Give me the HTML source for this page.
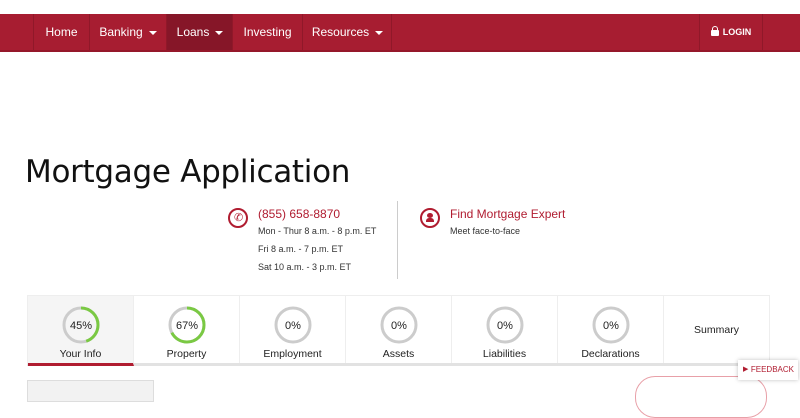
<!DOCTYPE html>
<html><head><style>
body{margin:0;width:800px;height:400px;overflow:hidden;background:#fff;font-family:"Liberation Sans",sans-serif;position:relative}
.nav{position:absolute;top:14px;left:0;width:800px;height:36px;background:#a71d31;border-bottom:2px solid #95182a}
.nav div{position:absolute;top:0;height:36px;line-height:37px;color:#fff;font-size:12px;text-align:center;border-left:1px solid #901829}
.car{display:inline-block;border-left:4px solid transparent;border-right:4px solid transparent;border-top:4px solid #fff;vertical-align:middle;margin-left:6px}
h1{position:absolute;left:25px;top:154px;margin:0;font-family:"DejaVu Sans",sans-serif;font-weight:normal;font-size:31px;color:#111;letter-spacing:-0.3px}
.ic{position:absolute;width:16px;height:16px;border:2px solid #b01c30;border-radius:50%}
.red{color:#b01c30;font-size:12px;position:absolute}
.sm{font-size:9px;color:#333;position:absolute}
.tabs{position:absolute;left:27px;top:295px;width:741px;height:67px;border:1px solid #eee;border-bottom:3px solid #e2e2e2}
.tab{position:absolute;top:0;width:105px;height:67px;border-right:1px solid #eee;text-align:center}
.tab svg{position:absolute;left:34px;top:10px}
.tab .l{position:absolute;top:52px;width:100%;font-size:10.5px;color:#222}
</style></head><body>
<div class="nav">
<div style="left:33px;width:55px">Home</div>
<div style="left:89px;width:76px">Banking<span class="car"></span></div>
<div style="left:166px;width:66px;background:#861628">Loans<span class="car"></span></div>
<div style="left:232px;width:69px">Investing</div>
<div style="left:302px;width:89px">Resources<span class="car"></span></div>
<div style="left:391px;width:0"></div>
<div style="left:699px;width:62px;font-size:9px;font-weight:bold"><span style="display:inline-block;width:8px;height:6px;background:#fff;border-radius:1px;margin-right:4px;position:relative;top:1px"><span style="position:absolute;left:1px;top:-4px;width:4px;height:4px;border:1px solid #fff;border-bottom:none;border-radius:3px 3px 0 0"></span></span>LOGIN</div>
<div style="left:762px;width:38px"></div>
</div>
<h1>Mortgage Application</h1>
<div class="ic" style="left:228px;top:208px"><span style="position:absolute;left:4px;top:1px;color:#b01c30;font-size:11px">✆</span></div>
<div class="red" style="left:258px;top:207px">(855) 658-8870</div>
<div class="sm" style="left:258px;top:226px">Mon - Thur 8 a.m. - 8 p.m. ET</div>
<div class="sm" style="left:258px;top:244px">Fri 8 a.m. - 7 p.m. ET</div>
<div class="sm" style="left:258px;top:262px">Sat 10 a.m. - 3 p.m. ET</div>
<div style="position:absolute;left:397px;top:201px;width:1px;height:78px;background:#ccc"></div>
<div class="ic" style="left:420px;top:208px"><span style="position:absolute;left:5px;top:3px;width:6px;height:5px;border-radius:50%;background:#b01c30"></span><span style="position:absolute;left:4px;top:8px;width:8px;height:4px;border-radius:3px 3px 0 0;background:#b01c30"></span></div>
<div class="red" style="left:450px;top:207px">Find Mortgage Expert</div>
<div class="sm" style="left:450px;top:226px">Meet face-to-face</div>
<div class="tabs">
<div class="tab" style="left:0;background:#f5f5f5;border-bottom:3px solid #b01c30"><svg width="38" height="38"><circle cx="19" cy="19" r="17" fill="none" stroke="#ccc" stroke-width="3"/><circle cx="19" cy="19" r="17" fill="none" stroke="#7ac943" stroke-width="3" stroke-dasharray="48 200" transform="rotate(-90 19 19)"/><text x="19" y="23" font-size="11" text-anchor="middle" fill="#222" font-family="Liberation Sans">45%</text></svg><div class="l">Your Info</div></div>
<div class="tab" style="left:106px"><svg width="38" height="38"><circle cx="19" cy="19" r="17" fill="none" stroke="#ccc" stroke-width="3"/><circle cx="19" cy="19" r="17" fill="none" stroke="#7ac943" stroke-width="3" stroke-dasharray="72 200" transform="rotate(-90 19 19)"/><text x="19" y="23" font-size="11" text-anchor="middle" fill="#222" font-family="Liberation Sans">67%</text></svg><div class="l">Property</div></div>
<div class="tab" style="left:212px"><svg width="38" height="38"><circle cx="19" cy="19" r="17" fill="none" stroke="#ccc" stroke-width="3"/><text x="19" y="23" font-size="11" text-anchor="middle" fill="#222" font-family="Liberation Sans">0%</text></svg><div class="l">Employment</div></div>
<div class="tab" style="left:318px"><svg width="38" height="38"><circle cx="19" cy="19" r="17" fill="none" stroke="#ccc" stroke-width="3"/><text x="19" y="23" font-size="11" text-anchor="middle" fill="#222" font-family="Liberation Sans">0%</text></svg><div class="l">Assets</div></div>
<div class="tab" style="left:424px"><svg width="38" height="38"><circle cx="19" cy="19" r="17" fill="none" stroke="#ccc" stroke-width="3"/><text x="19" y="23" font-size="11" text-anchor="middle" fill="#222" font-family="Liberation Sans">0%</text></svg><div class="l">Liabilities</div></div>
<div class="tab" style="left:530px"><svg width="38" height="38"><circle cx="19" cy="19" r="17" fill="none" stroke="#ccc" stroke-width="3"/><text x="19" y="23" font-size="11" text-anchor="middle" fill="#222" font-family="Liberation Sans">0%</text></svg><div class="l">Declarations</div></div>
<div class="tab" style="left:636px;border-right:none"><div class="l" style="top:28px">Summary</div></div>
</div>
<div style="position:absolute;left:27px;top:380px;width:125px;height:20px;background:#f2f2f2;border:1px solid #ddd"></div>
<div style="position:absolute;left:635px;top:376px;width:130px;height:40px;border:1px solid #e8a0a8;border-radius:20px"></div>
<div style="position:absolute;left:738px;top:360px;width:60px;height:20px;background:#fff;box-shadow:0 0 4px rgba(0,0,0,.25);font-size:8px;color:#b01c30;line-height:20px;text-align:right;padding-right:4px;box-sizing:border-box"><span style="position:absolute;left:5px;font-size:7px">▶</span>FEEDBACK</div>
</body></html>
